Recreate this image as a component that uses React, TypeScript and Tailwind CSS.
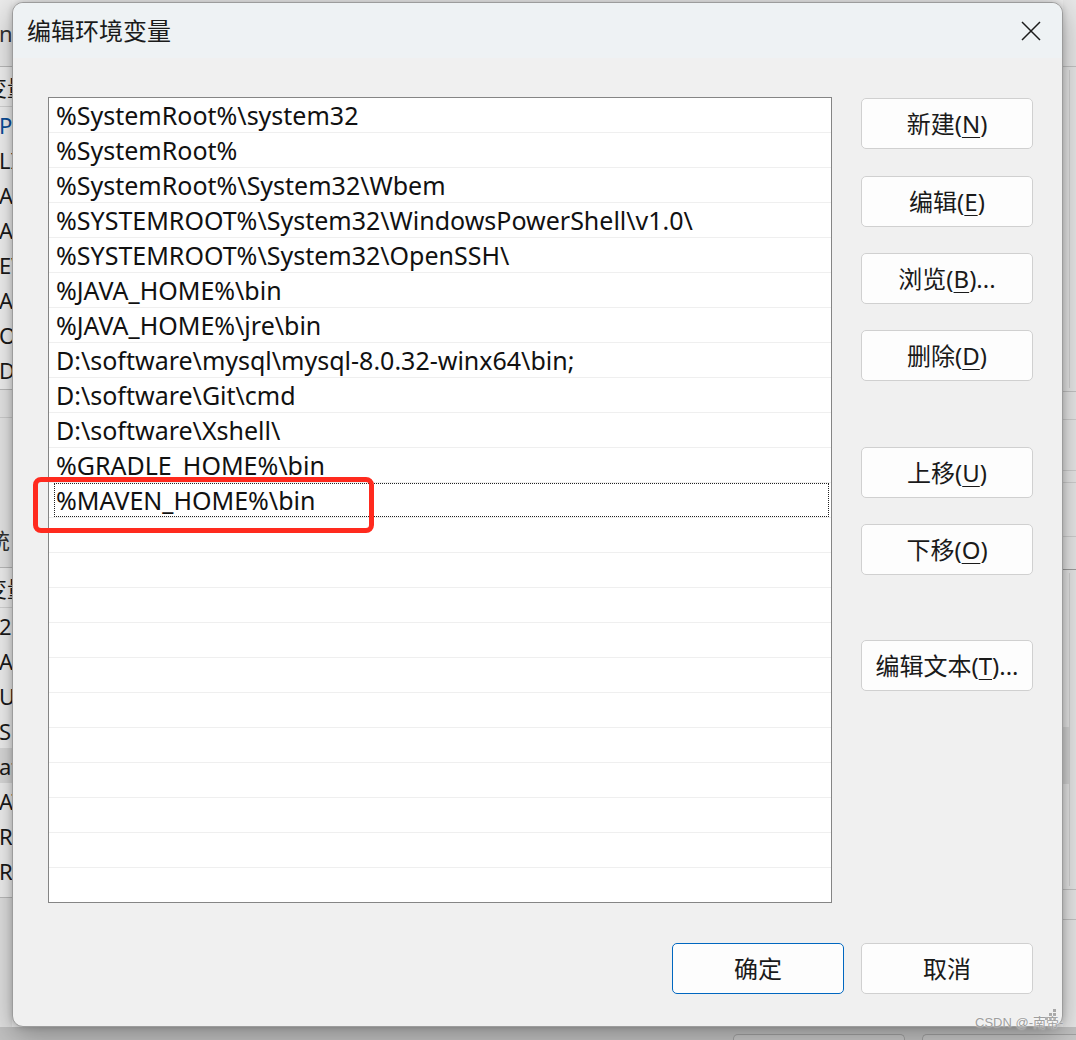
import React from "react";

const FONT = "font-['Noto_Sans','Noto_Sans_CJK_SC',sans-serif]";

const entries = [
  "%SystemRoot%\\system32",
  "%SystemRoot%",
  "%SystemRoot%\\System32\\Wbem",
  "%SYSTEMROOT%\\System32\\WindowsPowerShell\\v1.0\\",
  "%SYSTEMROOT%\\System32\\OpenSSH\\",
  "%JAVA_HOME%\\bin",
  "%JAVA_HOME%\\jre\\bin",
  "D:\\software\\mysql\\mysql-8.0.32-winx64\\bin;",
  "D:\\software\\Git\\cmd",
  "D:\\software\\Xshell\\",
  "%GRADLE_HOME%\\bin",
  "%MAVEN_HOME%\\bin",
];

const TOTAL_ROWS = 23;
const FOCUSED = 11;

function Key({ children }: { children: React.ReactNode }) {
  return <span className="underline decoration-1 underline-offset-[4px]">{children}</span>;
}

function Btn({
  children,
  primary = false,
  className = "",
}: {
  children: React.ReactNode;
  primary?: boolean;
  className?: string;
}) {
  return (
    <button
      className={
        "w-[172px] h-[51px] rounded-[5px] bg-[#fdfdfd] flex items-center justify-center text-[24px] leading-none text-[#1a1a1a] whitespace-nowrap " +
        (primary ? "border border-[#0067c0] " : "border border-[#d0d0d0] ") +
        className
      }
    >
      {children}
    </button>
  );
}

/* Strip of the parent "环境变量" window peeking out on the left */
function LeftStrip() {
  const upper = ["P", "LI", "A", "A", "EV", "A", "O", "DE"];
  const lower = ["2", "A", "U", "S", "at", "AT", "R(", "R("];
  return (
    <div className="w-[12px] h-full flex flex-col overflow-hidden text-[22px] text-[#1a1a1a] leading-none whitespace-nowrap">
      <div className="h-[67px] bg-[#ececec] border-b border-[#bdbdbd] flex items-center">
        <span className="-ml-[1px] text-[#333]">nlo</span>
      </div>
      <div className="h-[323px] bg-[#f4f4f4] border-b border-[#bdbdbd] flex flex-col">
        <div className="h-[40px] flex items-center border-b border-[#d6d6d6]">
          <span className="-ml-[15px]">变量</span>
        </div>
        {upper.map((t, i) => (
          <div key={i} className="h-[35px] shrink-0 flex items-center">
            <span className={"-ml-[1px] " + (i === 0 ? "text-[#0b4f9a]" : "")}>{t}</span>
          </div>
        ))}
      </div>
      <div className="h-[178px] bg-[#e9e9e9] border-b border-[#bdbdbd] flex flex-col">
        <div className="h-[28px] border-b border-[#d0d0d0]" />
        <div className="flex-1 flex items-end pb-[16px]">
          <span className="-ml-[12px] text-[#333]">统</span>
        </div>
      </div>
      <div className="h-[330px] bg-[#f2f2f2] border-b border-[#bdbdbd] flex flex-col">
        <div className="h-[40px] shrink-0 flex items-center border-b border-[#d6d6d6]">
          <span className="-ml-[15px]">变量</span>
        </div>
        {lower.map((t, i) => (
          <div
            key={i}
            className={"h-[35px] shrink-0 flex items-center " + (i === 4 ? "bg-[#dcdcdc]" : "")}
          >
            <span className="-ml-[1px]">{t}</span>
          </div>
        ))}
      </div>
      <div className="flex-1 bg-[#e2e2e2]" />
    </div>
  );
}

/* Right edge of the parent window: list frames and scrollbar tracks */
function RightStrip() {
  return (
    <div className="w-[13px] h-full flex flex-col bg-[#e8e8e8]">
      <div className="h-[67px] border-b border-[#c4c4c4]" />
      <div className="h-[325px] border-b border-[#c4c4c4] flex">
        <div className="w-[6px]" />
        <div className="w-[1px] bg-[#d2d2d2] my-[3px]" />
      </div>
      <div className="h-[28px] border-b border-[#cfcfcf]" />
      <div className="h-[51px] border-b border-[#cfcfcf]" />
      <div className="h-[12px] border-b border-[#cfcfcf]" />
      <div className="h-[54px] border-b border-[#cfcfcf]" />
      <div className="h-[33px] border-b border-[#9e9e9e]" />
      <div className="h-[320px] border-b border-[#c4c4c4] flex">
        <div className="w-[6px] flex flex-col">
          <div className="h-[157px]" />
          <div className="h-[57px] bg-[#d6d6d6]" />
        </div>
        <div className="w-[1px] bg-[#d2d2d2] my-[3px]" />
      </div>
      <div className="h-[30px] border-b border-[#c4c4c4]" />
      <div className="flex-1" />
    </div>
  );
}

function Dialog() {
  return (
    <div className="absolute left-[12px] top-[2px] w-[1051px] h-[1025px] rounded-[11px] border border-[#9c9c9c] bg-[#f0f0f0] shadow-[0_8px_30px_rgba(0,0,0,0.32),0_0_6px_rgba(0,0,0,0.18)] flex flex-col overflow-hidden">
      {/* title bar */}
      <div className="h-[55px] shrink-0 bg-[#eef2f4] flex items-center justify-between pl-[14px] pr-[21px]">
        <span className="text-[24px] text-[#1b1b1b] leading-none">编辑环境变量</span>
        <svg width="20" height="20" viewBox="0 0 20 20" className="text-[#1b1b1b]">
          <path d="M1 1 L19 19 M19 1 L1 19" stroke="currentColor" strokeWidth="1.5" />
        </svg>
      </div>

      {/* body */}
      <div className="flex-1 flex flex-col">
        <div className="flex pl-[35px] pt-[39px] gap-[29px]">
          <div className="w-[784px] h-[806px] border border-[#858585] bg-white overflow-hidden">
            {Array.from({ length: TOTAL_ROWS }).map((_, i) => (
              <div
                key={i}
                className="relative h-[35px] border-b border-[#efefef] flex items-center pl-[7px] text-[25px] text-[#111] leading-none whitespace-nowrap"
              >
                {entries[i] ?? ""}
                {i === FOCUSED && (
                  <div className="absolute left-[5px] right-[2px] top-0 bottom-0 border border-dotted border-[#222]" />
                )}
              </div>
            ))}
          </div>

          <div className="flex flex-col">
            <Btn className="mt-[1px]">
              新建(<Key>N</Key>)
            </Btn>
            <Btn className="mt-[27px]">
              编辑(<Key>E</Key>)
            </Btn>
            <Btn className="mt-[26px]">
              浏览(<Key>B</Key>)...
            </Btn>
            <Btn className="mt-[26px]">
              删除(<Key>D</Key>)
            </Btn>
            <Btn className="mt-[66px]">
              上移(<Key>U</Key>)
            </Btn>
            <Btn className="mt-[26px]">
              下移(<Key>O</Key>)
            </Btn>
            <Btn className="mt-[65px]">
              编辑文本(<Key>T</Key>)...
            </Btn>
          </div>
        </div>

        <div className="mt-auto mb-[32px] pr-[29px] flex justify-end gap-[17px]">
          <Btn primary>确定</Btn>
          <Btn>取消</Btn>
        </div>
      </div>

      {/* resize grip */}
      <svg
        width="12"
        height="12"
        viewBox="0 0 12 12"
        className="absolute right-[5px] bottom-[5px]"
      >
        <rect x="8" y="0" width="3" height="3" fill="#a8a8a8" />
        <rect x="4" y="4" width="3" height="3" fill="#a8a8a8" />
        <rect x="8" y="4" width="3" height="3" fill="#a8a8a8" />
        <rect x="0" y="8" width="3" height="3" fill="#a8a8a8" />
        <rect x="4" y="8" width="3" height="3" fill="#a8a8a8" />
        <rect x="8" y="8" width="3" height="3" fill="#a8a8a8" />
      </svg>
    </div>
  );
}

export default function App() {
  return (
    <div className={"relative w-[1076px] h-[1040px] overflow-hidden bg-[#e6e6e6] " + FONT}>
      {/* parent window behind the dialog */}
      <div className="flex flex-col h-full">
        <div className="h-[1027px] flex">
          <LeftStrip />
          <div className="flex-1 bg-[#efefef]" />
          <RightStrip />
        </div>
        <div className="flex-1 bg-[#c2c2c2] flex pl-[733px] pt-[7px] gap-[17px]">
          <div className="w-[172px] h-full rounded-t-[5px] border border-b-0 border-[#a2a2a2] bg-[#c8c8c8]" />
          <div className="flex-1 h-full rounded-tl-[5px] border border-r-0 border-b-0 border-[#a2a2a2] bg-[#c8c8c8]" />
        </div>
      </div>

      <Dialog />

      {/* highlight annotation around the new entry */}
      <div className="absolute left-[33px] top-[477px] w-[341px] h-[56px] rounded-[8px] border-[5px] border-[#ff2a1e]" />

      {/* watermark */}
      <div className="absolute left-[975px] top-[1016px] text-[13px] leading-none text-[#9e9e9e] whitespace-nowrap font-['Liberation_Sans','Noto_Sans_CJK_SC',sans-serif] [text-shadow:0_0_2px_#fff]">
        CSDN @-南帝-
      </div>
    </div>
  );
}
